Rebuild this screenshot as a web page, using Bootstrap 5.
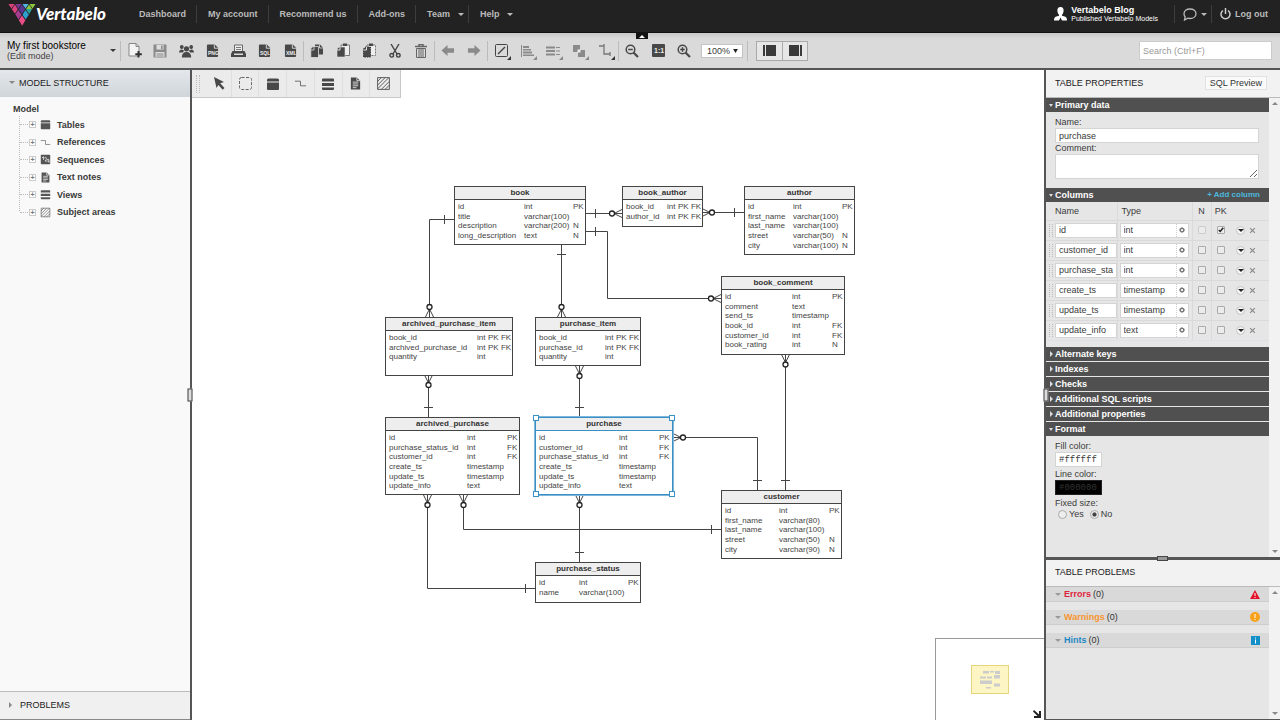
<!DOCTYPE html>
<html lang="en">
<head>
<meta charset="utf-8">
<meta name="viewport" content="width=device-width, initial-scale=1">
<title>Vertabelo - My first bookstore</title>
<link rel="stylesheet" href="https://cdn.jsdelivr.net/npm/bootstrap@5.3.0/dist/css/bootstrap.min.css">
<style>
:root{--ink:#3a3a3a;--line:#555;--panel:#e6e6e6}
body{font-family:"Liberation Sans",Arial,sans-serif;font-size:9px;line-height:12px;color:var(--ink);background:#fff}
button,input,select,textarea{font:inherit;color:inherit;border-radius:0}
button{background:none;border:0;padding:0}
svg{display:block}
svg:not([fill]){fill:currentColor}
a{color:inherit;text-decoration:none}
.caret-s{width:0;height:0;border:3px solid transparent;border-top-color:currentColor;border-bottom:0}
.caret-r{width:3px;height:0;border:3px solid transparent;border-left-color:currentColor;border-right:0}
.caret-u{width:0;height:0;border:3px solid transparent;border-bottom-color:currentColor;border-top:0}

/* top bar */
.topbar{height:33px;background:#222;color:#bbb;font-weight:700;border-bottom:1px solid #111}
.brand-box{width:128px;padding-left:8px}
.brand-name{font:italic 900 17px/20px Lato,sans-serif;color:#fff}
.topnav a{height:18px;padding:0 10px 0 11px;border-right:1px solid #3d3d3d}
.topnav .last-link{border:0}
.who{color:#fff;line-height:9px}
.who small{display:block;font-size:7px;line-height:8px;font-weight:400}
.vsep{width:1px;height:18px;background:#3d3d3d}

/* tool bar */
.toolbar{height:37px;background:linear-gradient(#c8c8c8,#dadada 6px);border-bottom:2px solid var(--line)}
.model-name{width:120px;padding:0 4px 0 7px}
.model-name b{font-size:10px;line-height:11px;font-weight:400;color:#000;display:block}
.model-name span span{line-height:10px;display:block;color:#444}
.tb{width:26px;height:26px;position:relative;color:#484848}
.tb.dim{color:#8a8a8a}
.tsep{width:1px;height:20px;background:#bbb}
.corner::after{content:"";position:absolute;right:3px;bottom:4px;border:2px solid;border-color:transparent #333 #333 transparent}
.corner.dim::after{border-color:transparent #888 #888 transparent}
.zoom-sel{appearance:none;width:42px;height:14px;border:1px solid #c4c4c4;padding:0 0 0 5px;line-height:12px;background:#fff url("data:image/svg+xml,%3Csvg xmlns='http://www.w3.org/2000/svg' viewBox='0 0 6 5'%3E%3Cpath d='M0 0h6L3 5z' fill='%23222'/%3E%3C/svg%3E") right 4px center/5px 4px no-repeat}
.toggle-pair{border:1px solid #aaa;background:#e6e6e6}
.toggle-pair button{width:25px;height:18px}
.toggle-pair button+button{border-left:1px solid #aaa}
.search-in{width:133px;height:19px;border:1px solid #ccc;padding:0 3px;background:#fff}
.search-in::placeholder{color:#999}
.fold-tab{top:33px;left:50%;width:12px;height:6px;margin-left:-4px;background:#111;color:#fff}

/* side panels */
.side-left{width:192px;background:#f9f9f9;border-right:2px solid var(--line);z-index:1}
.side-head{height:27px;padding:0 0 2px 9px;background:linear-gradient(#e4e8ec,#d0d5da);color:#222}
.side-head.foot{height:29px;background:#f0f0f0;border-top:1px solid #bbb;border-bottom:1px solid #888}
.side-head i{color:#888}
.tree-box{padding-top:6px}
.tree-box>div{padding-left:13px}
.tree{height:105px;margin:1px 0 0 19px;border-left:1px dotted #bbb}
.tree li{position:relative}
.tree li::before{content:"";width:8px;border-top:1px dotted #bbb}
.tree li:last-child::after{content:"";position:absolute;left:-1px;top:50%;bottom:0;width:1px;background:#f9f9f9}
.plus{width:7px;height:7px;border:1px solid #ccc;background:#fff;font-size:7px;line-height:5px;color:#777;text-align:center;margin:0 4px 0 1px}
.tree svg{color:#555;margin-right:6px}
.grip{width:5px;height:13px;background:#ddd;border:1px solid #444;z-index:3}

/* canvas */
.canvas{background:#fff;min-width:700px}
.palette{width:209px;height:28px;background:#ebebeb;border:solid #c8c8c8;border-width:0 1px 1px 0;padding:0 2px 0 14px;color:#484848}
.palette::before{content:"";position:absolute;left:4px;top:5px;width:4px;height:18px;border:dotted #bbb;border-width:0 1px}
.palette button{border-right:1px solid #dedede}
.palette button:last-child{border:0}
.links{inset:0;width:100%;height:100%}
.links g{stroke:#444;fill:none}
.entity{position:absolute;border:1px solid #444;background:#fff;font-size:8px;line-height:9px;white-space:nowrap}
.entity table{width:100%;table-layout:fixed}
.entity caption{caption-side:top;height:13px;line-height:12px;padding:0;margin-bottom:1px;background:#eee;border-bottom:1px solid #444;text-align:center;font-weight:700;color:#333}
.entity td{padding:0;color:#444}
.entity tr{height:10px}
.entity tr:nth-child(3n){height:9px}
.entity td:first-child{width:var(--n);padding-left:3px}
.entity td:nth-child(2){width:var(--t)}
#book{left:262px;top:116px;width:132px;height:59px;--n:69px;--t:49px}
#book-author{left:430px;top:116px;width:81px;height:41px;--n:44px;--t:11px}
#author{left:552px;top:116px;width:111px;height:69px;--n:48px;--t:49px}
#book-comment{left:529px;top:206px;width:124px;height:79px;--n:70px;--t:40px}
#archived-purchase-item{left:193px;top:247px;width:128px;height:59px;--n:91px;--t:11px}
#purchase-item{left:343px;top:247px;width:106px;height:49px;--n:69px;--t:11px}
#archived-purchase{left:193px;top:347px;width:135px;height:78px;--n:81px;--t:40px}
#purchase{left:343px;top:347px;width:138px;height:78px;--n:83px;--t:40px}
#customer{left:529px;top:420px;width:121px;height:69px;--n:57px;--t:50px}
#purchase-status{left:343px;top:492px;width:106px;height:41px;--n:43px;--t:49px}
#purchase,#purchase caption{border-color:#3a8fc4}
#purchase{box-shadow:0 0 0 1px #7db7dc}
.knob{position:absolute;width:6px;height:6px;background:#fff;border:1px solid #3a8fc4}
.minimap{right:0;bottom:0;width:109px;height:82px;border:solid #999;border-width:1px 0 0 1px;background:#fff}

/* right panel */
.side-right{width:236px;background:#f2f2f2;border-left:2px solid var(--line);z-index:1}
.props-head{height:28px;padding:0 10px 2px 9px;border-bottom:1px solid #bbb;color:#222}
.sql-btn{background:#fafafa;border:1px solid #e2e2e2;padding:0 4px;height:14px;color:#333;margin-right:3px}
.props{background:var(--panel);min-width:0}
.rail{width:11px;background:#f2f2f2;color:#888;padding:4px 0}
.bar{width:100%;height:14px;background:#505050;color:#fff;font-weight:700;padding:0 9px 0 2px;margin-bottom:1px}
.bar .caret-r{width:3px;margin:0 2px;opacity:.8}
.bar .caret-s{opacity:.8;border-width:3px 2px 0;margin:0 2px 0 1px}
.bars-box{padding-top:6px}
.add-col{color:#4db8dd;font-weight:700;font-size:8px}
.fieldset-box{padding:4px 10px 9px 9px}
.fieldset-box label{display:block;line-height:11px}
.txt{border:1px solid #d4d4d4;background:#fff;padding:0 3px;height:15px;width:100%;display:block}
textarea.txt{height:25px;resize:vertical}
.cols-table{table-layout:fixed;width:100%;color:var(--ink)}
.cols-table th{font-weight:400;height:18px;padding:0}
.cols-table td{height:20px;padding:0;border-top:1px solid #dadada}
.cols-table th+th+th,.cols-table td+td+td{border-left:1px solid #dadada}
.cols-table th+th+th+th+th+th,.cols-table td+td+td+td+td+td{border-left:0}
.handle{width:4px;height:13px;margin-left:3px;border:dotted #bbb;border-width:0 1px}
.type-box{height:15px;margin:0 3px 0 2px;background:#fff;border:1px solid #d4d4d4}
.type-box input{border:0;width:0;min-width:0;padding:0 3px;height:13px;background:none}
.type-box button{width:12px;flex-shrink:0;border-left:1px dotted #ccc;color:#777}
.tick{appearance:none;width:8px;height:8px;border:1px solid #aaa;border-radius:1px;background:#ececec;display:block;margin:0 auto}
.tick:disabled{border-color:#ccc}
.tick:checked{background:#eee url("data:image/svg+xml,%3Csvg xmlns='http://www.w3.org/2000/svg' viewBox='0 0 8 8'%3E%3Cpath d='M1 4l2 2 4-5' fill='none' stroke='%23222' stroke-width='2'/%3E%3C/svg%3E")}
.menu-dot{width:9px;height:9px;border:1px solid #c4c4c4;border-radius:50%;background:#f4f4f4;color:#222}
.menu-dot .caret-s{border-width:3px 3px 0}
.del{color:#888;margin-left:4px;display:block}
.color-in{width:47px;height:15px;border:1px solid #d4d4d4;padding:0 3px;margin-bottom:2px;font-family:"Liberation Mono",monospace;background:#fff;display:block}
.color-in.black{background:#000;color:#333;border-color:#222}
.radio-in{appearance:none;width:9px;height:9px;border:1px solid #aaa;border-radius:50%;background:#eee;margin:0}
.radio-in:checked{background:radial-gradient(circle,#444 35%,#eee 50%)}
.radio-row{gap:2px;padding-left:3px}
.hsplit{height:3px;background:var(--line);position:relative}
.hgrip{left:50%;top:-1px;width:11px;height:5px;margin-left:-6px;background:#999;border:1px solid #444}
.lower{height:160px;border-bottom:1px solid #555}
.lower .props-head{height:27px}
.prob{height:15px;width:100%;background:#d9d9d9;border-bottom:1px solid #cdcdcd;padding:0 9px;color:#333}
.prob .caret-s{color:#999;margin-right:-1px}
.prob b{margin-right:-2px}
.err-tx{color:#e0233c}
.warn-tx{color:#f8952d}
.hint-tx{color:#1e88c4}
</style>
</head>
<body class="vh-100 d-flex flex-column overflow-hidden">

<svg width="0" height="0" class="position-absolute" aria-hidden="true">
  <defs>
    <symbol id="i-table" viewBox="0 0 14 14"><path d="M1 3a1.500 1.500 0 0 1 1.500-1.500h9A1.500 1.500 0 0 1 13 3v1.500H1zM1 5.500h12V12a1 1 0 0 1-1 1H2a1 1 0 0 1-1-1z"/></symbol>
    <symbol id="i-view" viewBox="0 0 14 14"><path d="M1 2.500a1 1 0 0 1 1-1h10a1 1 0 0 1 1 1v2H1zM1 6h12v3H1zM1 10.500h12V12a1 1 0 0 1-1 1H2a1 1 0 0 1-1-1z"/></symbol>
    <symbol id="i-ref" viewBox="0 0 14 14"><path d="M1 4.500h6v5h6" fill="none" stroke="currentColor" stroke-width=".8"/></symbol>
    <symbol id="i-note" viewBox="0 0 14 14"><path d="M2 .500h6.500L12 4v9.500H2z"/><path d="M4 5.500h6M4 7.500h6M4 9.500h6M4 11.500h4M8.500.500v3.500h3.500" stroke="#eee" fill="none" stroke-width=".9"/></symbol>
    <symbol id="i-area" viewBox="0 0 14 14"><path d="M1.500 1.500h11v11h-11zM1.500 5l3.500-3.500M1.500 8.500l7-7M1.500 12l10.500-10.500M5 12.500l7.500-7.500M8.500 12.500l4-4" fill="none" stroke="currentColor" stroke-width=".8"/></symbol>
    <symbol id="i-seq" viewBox="0 0 14 14"><rect x="1" y="1" width="12" height="12" rx="1"/><path d="M2.500 5l2-1.500v4M5.500 5q2-2 2.500 0T6.500 9h3M9 7q3-1 2.500 1t-1.500 1q3 0 1.500 2" fill="none" stroke="#eee"/></symbol>
    <symbol id="i-file" viewBox="0 0 14 14"><path d="M2 0h7.500L13 3.500V12.500a1 1 0 0 1-1 1H2a1 1 0 0 1-1-1V1a1 1 0 0 1 1-1z"/><path d="M9 0v4h4" stroke="#ddd" fill="none"/></symbol>
    <symbol id="i-doc2" viewBox="0 0 14 14"><path d="M5 .500h5l3 3v7H5z"/><path d="M.8 4.500 3 2.500h5.500v11H.8z" stroke="#ddd" stroke-width=".8"/><path d="M4 3v3H1M9.500.500v3.500H13" stroke="#ddd" fill="none" stroke-width=".8"/></symbol>
    <symbol id="i-zoom" viewBox="0 0 14 14"><circle cx="5.500" cy="5.500" r="4.300" fill="none" stroke="currentColor" stroke-width="1.500"/><path d="M8.500 8.500l4.500 4.500" stroke="currentColor" stroke-width="2.200"/><path d="M3.200 5.500h4.600" stroke="currentColor" stroke-width="1.500"/></symbol>
    <symbol id="i-left" viewBox="0 0 14 14"><path d="M0 7l6.500-6v3.500h7v5h-7V13z"/></symbol>
    <symbol id="i-gear" viewBox="0 0 8 8"><path d="M3.300 0h1.400v1.200L6 1.200 7.200 2.400 6.800 3.300H8v1.400H6.800L7 6 5.800 7 4.700 6.800V8H3.300V6.800L2.200 7 1 5.800l.2-1.100H0V3.300h1.200L1 2.200 2.200 1l1.100.2zM4 2.500a1.500 1.500 0 1 0 0 3 1.500 1.500 0 0 0 0-3z" fill-rule="evenodd"/></symbol>
    <symbol id="i-x" viewBox="0 0 6 6"><path d="M1 1l4 4M5 1L1 5" stroke="currentColor"/></symbol>
    <g id="many"><path d="M0-4 8 0 0 4"/><circle cx="10" r="2.500" fill="#fff" stroke="#222" stroke-width="1.300"/></g>
  </defs>
</svg>

<header class="topbar d-flex align-items-center flex-shrink-0 pb-1">
  <a class="brand-box d-flex align-items-center flex-shrink-0" href="#">
    <svg width="28" height="25" viewBox="0 0 28 25" class="flex-shrink-0 mt-1" aria-hidden="true">
      <path d="M0 0h7l3.500 5-3.500 5z" fill="#d8437f"/><path d="M7 0h7l-4 6z" fill="#7b3690"/><path d="M10 5.500l4 5.500-3.500 5L7 10z" fill="#a63c8d"/><path d="M14 0l3.500 5L14 11l-4-5.500z" fill="#5b3690"/><path d="M14 0h7l-3.500 5z" fill="#4fb3e4"/><path d="M17.500 5l3.500 5.500-3.500 5L14 11z" fill="#2f9fd0"/><path d="M21 0h6.500l-3.500 5.500L17.500 5z" fill="#8dc63f"/><path d="M17.500 5h6.500L21 10.500z" fill="#27a39a"/><path d="M14 11l3.500 5.000-3.500 6.000-3.500-6.000z" fill="#ea4c88"/>
      <path d="M3.500 5 7 0M7 10 14 0M10.500 16 21 0M0 0 14 22M7 0 17.500 16M14 0l7 10.500M21 0l3.500 5" stroke="#222" stroke-width=".8"/>
    </svg>
    <span class="brand-name">Vertabelo</span>
  </a>
  <nav class="topnav d-flex align-items-center">
    <a class="d-flex align-items-center" href="#">Dashboard</a>
    <a class="d-flex align-items-center" href="#">My account</a>
    <a class="d-flex align-items-center" href="#">Recommend us</a>
    <a class="d-flex align-items-center" href="#">Add-ons</a>
    <a class="d-flex align-items-center gap-2 pe-1" href="#">Team <i class="caret-s"></i></a>
    <a class="d-flex align-items-center gap-2 last-link" href="#">Help <i class="caret-s"></i></a>
  </nav>
  <div class="ms-auto d-flex align-items-center flex-shrink-0 pe-2 me-1">
    <a class="who d-flex align-items-center gap-1" href="#">
      <svg width="13" height="14" viewBox="0 0 13 14" aria-hidden="true"><path d="M6.500 0C9 0 9.800 1.700 9.600 4c-.2 2-1 3.200-1.600 3.800v1l2.700.8c1.600.5 2.300 1.600 2.300 4H8L6.500 10.500 5 13.600H0c0-2.400.7-3.500 2.300-4L5 8.800v-1C4.400 7.200 3.600 6 3.400 4 3.200 1.700 4 0 6.500 0z"/></svg>
      <span>Vertabelo Blog<small>Published Vertabelo Models</small></span>
    </a>
    <span class="vsep ms-3 me-2"></span>
    <button class="d-flex align-items-center gap-1" aria-label="Chat"><svg width="14" height="13" viewBox="0 0 14 13" aria-hidden="true"><path d="M7 1c3.500 0 6 2 6 4.700S10.500 10.500 7 10.500c-.8 0-1.500 0-2.200-.3L1.500 12l.7-3C1.400 8 1 7 1 5.700 1 3 3.500 1 7 1z" fill="none" stroke="#bbb" stroke-width="1.300"/></svg><i class="caret-s"></i></button>
    <span class="vsep ms-1 me-2"></span>
    <a class="d-flex align-items-center gap-1" href="#"><svg width="11" height="12" viewBox="0 0 11 12" aria-hidden="true"><path d="M3 2.500a4.500 4.500 0 1 0 5 0M5.500 0v6" fill="none" stroke="#ccc" stroke-width="1.500"/></svg>Log out</a>
  </div>
</header>
<button class="fold-tab position-absolute d-flex align-items-center justify-content-center" aria-label="Hide header"><i class="caret-u"></i></button>

<div class="toolbar d-flex align-items-center flex-shrink-0">
  <button class="model-name d-flex align-items-center justify-content-between text-start"><span><b>My first bookstore</b><span>(Edit mode)</span></span><i class="caret-s"></i></button>
  <span class="tsep"></span>
  <button class="tb d-grid" aria-label="New"><svg class="m-auto" width="15" height="15" viewBox="0 0 15 15"><path d="M2 .500h7l3 3v9.500H2z" fill="#f4f4f4" stroke="#888"/><path d="M9 .500v3h3" fill="none" stroke="#888"/><path d="M11.500 8v6.500M8.300 11.300h6.500" stroke="#333" stroke-width="2"/></svg></button>
  <button class="tb dim d-grid" aria-label="Save"><svg class="m-auto" width="14" height="14" viewBox="0 0 14 14"><path d="M.5.500h13v13H.5z"/><path d="M3.500 1h7v4.500h-7zM2.500 8h9v5h-9z" fill="#ddd"/><path d="M8 1.500h1.500V5H8zM3.500 9.500h7v1h-7zM3.500 11.500h7v1h-7z"/></svg></button>
  <button class="tb d-grid" aria-label="Share"><svg class="m-auto" width="15" height="14" viewBox="0 0 15 14"><circle cx="2.800" cy="3" r="1.900"/><circle cx="12.200" cy="3" r="1.900"/><path d="M0 8.500Q.3 5.500 2.800 5.500L5 6.500 4 8.500zM15 8.500q-.3-3-2.800-3L10 6.500l1 2z"/><circle cx="7.500" cy="4.800" r="2.600"/><path d="M2.800 13.500Q3 8 7.500 8t4.700 5.500z"/></svg></button>
  <button class="tb d-grid" aria-label="Export PNG"><svg class="m-auto" width="13" height="14" viewBox="0 0 13 14"><use href="#i-file" width="13" height="14"/><text x="2" y="11" font-size="5" font-weight="700" fill="#eee">PNG</text></svg></button>
  <button class="tb d-grid" aria-label="Print"><svg class="m-auto" width="15" height="14" viewBox="0 0 15 14"><path d="M3.500 7V1h8v6" fill="#eee" stroke="#666"/><path d="M5 3.500h5M5 5.500h5" stroke="#777"/><path d="M1.500 7h12L15 10v3H0v-3z"/><path d="M3 9.500h9v1.500H3z" fill="#ddd"/></svg></button>
  <button class="tb d-grid" aria-label="Export SQL"><svg class="m-auto" width="13" height="14" viewBox="0 0 13 14"><use href="#i-file" width="13" height="14"/><text x="2" y="11" font-size="5" font-weight="700" fill="#eee">SQL</text></svg></button>
  <button class="tb d-grid" aria-label="Export XML"><svg class="m-auto" width="13" height="14" viewBox="0 0 13 14"><use href="#i-file" width="13" height="14"/><text x="2" y="11" font-size="5" font-weight="700" fill="#eee">XML</text></svg></button>
  <span class="tsep"></span>
  <button class="tb d-grid" aria-label="Copy"><svg class="m-auto" width="14" height="14"><use href="#i-doc2"/></svg></button>
  <button class="tb d-grid" aria-label="Paste"><svg class="m-auto" width="15" height="15" viewBox="0 0 15 15"><path d="M5 2h8.500v10.500H5z" fill="#eee" stroke="#777"/><path d="M7 .500h4V3H7z"/><path d="M1 6l2-2h6v10H1z" stroke="#ddd" stroke-width=".6"/><path d="M4 4v3H1" stroke="#ddd" fill="none"/></svg></button>
  <button class="tb d-grid" aria-label="Paste special"><svg class="m-auto" width="15" height="15" viewBox="0 0 15 15"><path d="M5 2h8.500v10.500H5z" fill="#eee" stroke="#777" stroke-dasharray="2 1"/><path d="M7 .500h4V3H7z"/><path d="M1.500 6l2-2h5v10h-7z" stroke="#333" stroke-dasharray="1.500 1"/><path d="M4.500 4v3h-3" stroke="#ddd" fill="none"/></svg></button>
  <button class="tb d-grid" aria-label="Cut"><svg class="m-auto" width="12" height="14" viewBox="0 0 12 14" fill="none" stroke="#444" stroke-width="1.400"><path d="M2 0l6 10M10 0L4 10"/><circle cx="2.700" cy="11.300" r="1.800"/><circle cx="9.300" cy="11.300" r="1.800"/></svg></button>
  <button class="tb d-grid" aria-label="Delete"><svg class="m-auto" width="12" height="14" viewBox="0 0 12 14" fill="none" stroke="#666"><path d="M0 2.500h12M4 2V.500h4V2" stroke-width="1.500"/><path d="M1.500 4.500v9h9v-9zM4 5v8M6 5v8M8 5v8"/></svg></button>
  <span class="tsep"></span>
  <button class="tb dim d-grid" aria-label="Undo"><svg class="m-auto" width="14" height="13"><use href="#i-left"/></svg></button>
  <button class="tb dim d-grid" aria-label="Redo"><svg class="m-auto" width="14" height="13" viewBox="0 0 14 14"><path d="M14 7L7.500 1v3.500h-7v5h7V13z"/></svg></button>
  <span class="tsep"></span>
  <button class="tb corner d-grid" aria-label="Line style"><svg class="m-auto" width="13" height="13" viewBox="0 0 13 13" fill="none" stroke="#444"><rect x=".5" y=".5" width="12" height="12" rx="1"/><path d="M3 10l7-7" stroke-width="1.500"/></svg></button>
  <button class="tb dim corner d-grid" aria-label="Align"><svg class="m-auto" width="13" height="12" viewBox="0 0 13 12"><path d="M0 0h1v12H0zM2 1h6v2H2zM2 4h8v1.500H2zM2 6.500h9v2H2zM2 9.500h11v1.500H2z"/></svg></button>
  <button class="tb dim corner d-grid" aria-label="Distribute"><svg class="m-auto" width="14" height="10" viewBox="0 0 14 10"><path d="M0 .500h9v2H0zM0 4h9v2H0zM0 7.500h9v2H0zM10 1h4v1h-4zM10 4.500h4v1h-4zM10 8h4v1h-4z"/></svg></button>
  <button class="tb dim corner d-grid" aria-label="Arrange"><svg class="m-auto" width="12" height="12" viewBox="0 0 12 12"><path d="M0 0h7v7H0zM5 5h7v7H5z"/><path d="M4.500 4.500h3v3h-3z" fill="#eee"/></svg></button>
  <button class="tb corner d-grid" aria-label="Routing"><svg class="m-auto" width="13" height="13" viewBox="0 0 13 13" fill="none" stroke="#777"><path d="M0 2h5v8h6M5 0v2M11 8v4" stroke-width="1.300"/></svg></button>
  <span class="tsep"></span>
  <button class="tb d-grid" aria-label="Zoom out"><svg class="m-auto" width="14" height="14"><use href="#i-zoom"/></svg></button>
  <button class="tb d-grid" aria-label="Actual size"><svg class="m-auto" width="13" height="13" viewBox="0 0 13 13"><rect width="13" height="13" rx="1"/><text x="2" y="9" font-size="7" font-weight="700" fill="#eee">1:1</text></svg></button>
  <button class="tb d-grid" aria-label="Zoom in"><svg class="m-auto" width="14" height="14" viewBox="0 0 14 14"><use href="#i-zoom"/><path d="M5.500 3.200v4.600" stroke="#444" stroke-width="1.500"/></svg></button>
  <select class="zoom-sel ms-1" aria-label="Zoom level"><option>100%</option></select>
  <span class="tsep ms-1 me-2"></span>
  <div class="toggle-pair d-flex">
    <button class="d-grid" aria-label="Left panel"><svg class="m-auto" width="13" height="11"><path d="M0 0h2v11H0zM3 0h10v11H3z"/></svg></button>
    <button class="d-grid" aria-label="Right panel"><svg class="m-auto" width="13" height="11"><path d="M0 0h10v11H0zM11 0h2v11h-2z"/></svg></button>
  </div>
  <input class="search-in ms-auto me-2" type="search" placeholder="Search (Ctrl+F)" aria-label="Search">
</div>

<div class="d-flex flex-grow-1 overflow-hidden">
  <aside class="side-left d-flex flex-column flex-shrink-0 position-relative">
    <button class="side-head d-flex align-items-center gap-1"><i class="caret-s"></i>MODEL STRUCTURE</button>
    <div class="tree-box fw-bold">
      <div>Model</div>
      <ul class="tree list-unstyled d-flex flex-column">
        <li class="d-flex align-items-center flex-fill"><span class="plus">+</span><svg width="11" height="11"><use href="#i-table"/></svg>Tables</li>
        <li class="d-flex align-items-center flex-fill"><span class="plus">+</span><svg width="11" height="11"><use href="#i-ref"/></svg>References</li>
        <li class="d-flex align-items-center flex-fill"><span class="plus">+</span><svg width="11" height="11"><use href="#i-seq"/></svg>Sequences</li>
        <li class="d-flex align-items-center flex-fill"><span class="plus">+</span><svg width="11" height="11"><use href="#i-note"/></svg>Text notes</li>
        <li class="d-flex align-items-center flex-fill"><span class="plus">+</span><svg width="11" height="11"><use href="#i-view"/></svg>Views</li>
        <li class="d-flex align-items-center flex-fill"><span class="plus">+</span><svg width="11" height="11"><use href="#i-area"/></svg>Subject areas</li>
      </ul>
    </div>
    <button class="side-head foot d-flex align-items-center gap-2 mt-auto"><i class="caret-r"></i>PROBLEMS</button>
    <span class="grip position-absolute top-50 start-100 translate-middle"></span>
  </aside>

  <main class="canvas position-relative flex-grow-1 overflow-hidden">
    <svg class="links position-absolute" aria-hidden="true">
      <g transform="translate(-192 -70)">
        <path d="M454 219.500H429.500V317M444.500 215v9M586 213.500h36M595.500 209v9M586 231.500h21.500V298.500H721M595.500 227v9M561.500 244v73M557 254.500h9M702 212.500h42M734.500 208v9M785.500 354V490M781 480.500h9M428.500 375v42M424 407.500h9M579.500 365v52M575 407.500h9M673 437.500h84.500V490M753 480.500h9M427.500 495v93.500H535M525.500 584v9M463.500 495v34.500H721M711.500 525v9M579.500 495v67M575 552.500h9"/>
        <use href="#many" transform="translate(429.500 317) rotate(-90)"/>
        <use href="#many" transform="translate(561.500 317) rotate(-90)"/>
        <use href="#many" transform="translate(622 213.500) rotate(180)"/>
        <use href="#many" transform="translate(721 298.500) rotate(180)"/>
        <use href="#many" transform="translate(702 212.500)"/>
        <use href="#many" transform="translate(673 437.500)"/>
        <use href="#many" transform="translate(785.500 354.500) rotate(90)"/>
        <use href="#many" transform="translate(428.500 375) rotate(90)"/>
        <use href="#many" transform="translate(579.500 366) rotate(90)"/>
        <use href="#many" transform="translate(427.500 495) rotate(90)"/>
        <use href="#many" transform="translate(463.500 495) rotate(90)"/>
        <use href="#many" transform="translate(579.500 495) rotate(90)"/>
      </g>
    </svg>

    <div class="entity" id="book"><table><caption>book</caption><tbody>
      <tr><td>id</td><td>int</td><td>PK</td></tr><tr><td>title</td><td>varchar(100)</td><td></td></tr><tr><td>description</td><td>varchar(200)</td><td>N</td></tr><tr><td>long_description</td><td>text</td><td>N</td></tr></tbody></table></div>
    <div class="entity" id="book-author"><table><caption>book_author</caption><tbody>
      <tr><td>book_id</td><td>int</td><td>PK FK</td></tr><tr><td>author_id</td><td>int</td><td>PK FK</td></tr></tbody></table></div>
    <div class="entity" id="author"><table><caption>author</caption><tbody>
      <tr><td>id</td><td>int</td><td>PK</td></tr><tr><td>first_name</td><td>varchar(100)</td><td></td></tr><tr><td>last_name</td><td>varchar(100)</td><td></td></tr><tr><td>street</td><td>varchar(50)</td><td>N</td></tr><tr><td>city</td><td>varchar(100)</td><td>N</td></tr></tbody></table></div>
    <div class="entity" id="book-comment"><table><caption>book_comment</caption><tbody>
      <tr><td>id</td><td>int</td><td>PK</td></tr><tr><td>comment</td><td>text</td><td></td></tr><tr><td>send_ts</td><td>timestamp</td><td></td></tr><tr><td>book_id</td><td>int</td><td>FK</td></tr><tr><td>customer_id</td><td>int</td><td>FK</td></tr><tr><td>book_rating</td><td>int</td><td>N</td></tr></tbody></table></div>
    <div class="entity" id="archived-purchase-item"><table><caption>archived_purchase_item</caption><tbody>
      <tr><td>book_id</td><td>int</td><td>PK FK</td></tr><tr><td>archived_purchase_id</td><td>int</td><td>PK FK</td></tr><tr><td>quantity</td><td>int</td><td></td></tr></tbody></table></div>
    <div class="entity" id="purchase-item"><table><caption>purchase_item</caption><tbody>
      <tr><td>book_id</td><td>int</td><td>PK FK</td></tr><tr><td>purchase_id</td><td>int</td><td>PK FK</td></tr><tr><td>quantity</td><td>int</td><td></td></tr></tbody></table></div>
    <div class="entity" id="archived-purchase"><table><caption>archived_purchase</caption><tbody>
      <tr><td>id</td><td>int</td><td>PK</td></tr><tr><td>purchase_status_id</td><td>int</td><td>FK</td></tr><tr><td>customer_id</td><td>int</td><td>FK</td></tr><tr><td>create_ts</td><td>timestamp</td><td></td></tr><tr><td>update_ts</td><td>timestamp</td><td></td></tr><tr><td>update_info</td><td>text</td><td></td></tr></tbody></table></div>
    <div class="entity" id="purchase"><table><caption>purchase</caption><tbody>
      <tr><td>id</td><td>int</td><td>PK</td></tr><tr><td>customer_id</td><td>int</td><td>FK</td></tr><tr><td>purchase_status_id</td><td>int</td><td>FK</td></tr><tr><td>create_ts</td><td>timestamp</td><td></td></tr><tr><td>update_ts</td><td>timestamp</td><td></td></tr><tr><td>update_info</td><td>text</td><td></td></tr></tbody></table>
      <span class="knob top-0 start-0 translate-middle"></span><span class="knob top-0 start-100 translate-middle"></span><span class="knob top-100 start-0 translate-middle"></span><span class="knob top-100 start-100 translate-middle"></span></div>
    <div class="entity" id="customer"><table><caption>customer</caption><tbody>
      <tr><td>id</td><td>int</td><td>PK</td></tr><tr><td>first_name</td><td>varchar(80)</td><td></td></tr><tr><td>last_name</td><td>varchar(100)</td><td></td></tr><tr><td>street</td><td>varchar(50)</td><td>N</td></tr><tr><td>city</td><td>varchar(90)</td><td>N</td></tr></tbody></table></div>
    <div class="entity" id="purchase-status"><table><caption>purchase_status</caption><tbody>
      <tr><td>id</td><td>int</td><td>PK</td></tr><tr><td>name</td><td>varchar(100)</td><td></td></tr></tbody></table></div>

    <div class="palette position-relative d-flex">
      <button class="d-grid flex-fill" aria-label="Select"><svg class="m-auto" width="12" height="13" viewBox="0 0 12 13"><path d="M1 0l10 5-3.800 1.300 4.300 4.700-1.800 1.800-4.300-4.700L3.500 11z"/></svg></button>
      <button class="d-grid flex-fill" aria-label="Select area"><svg class="m-auto" width="13" height="13" viewBox="0 0 13 13"><rect x=".5" y=".5" width="12" height="12" rx="2" fill="none" stroke="#666" stroke-dasharray="3 1.500"/></svg></button>
      <button class="d-grid flex-fill" aria-label="Add table"><svg class="m-auto" width="14" height="14"><use href="#i-table"/></svg></button>
      <button class="d-grid flex-fill" aria-label="Add reference"><svg class="m-auto" width="13" height="13"><use href="#i-ref"/></svg></button>
      <button class="d-grid flex-fill" aria-label="Add view"><svg class="m-auto" width="14" height="14"><use href="#i-view"/></svg></button>
      <button class="d-grid flex-fill" aria-label="Add note"><svg class="m-auto" width="13" height="13"><use href="#i-note"/></svg></button>
      <button class="d-grid flex-fill" aria-label="Add area"><svg class="m-auto" width="15" height="15"><use href="#i-area"/></svg></button>
    </div>

    <div class="minimap position-absolute">
      <svg width="108" height="81" viewBox="0 0 108 81" aria-hidden="true">
        <rect x="35.500" y="26.500" width="37" height="28" fill="#fdf5c4" stroke="#e6d57a"/>
        <path d="M47 32h6v2.500h-6zM54 32h4v1.500h-4zM59 32h5v3h-5zM58 36h6v3.500h-6zM44 37.500h6v2h-6zM51 37.500h5v2h-5zM44 41.500h12v3.500H44zM58 44.500h6v3h-6zM50 48h5v1.500h-5z" fill="#ccc"/>
        <path d="M98 71l5 4.500V72h2v7h-7v-2h3.500L97 72.500z" fill="#222"/>
      </svg>
    </div>
  </main>

  <aside class="side-right d-flex flex-column flex-shrink-0 position-relative">
    <span class="grip position-absolute top-50 start-0 translate-middle"></span>
    <div class="props-head d-flex align-items-center justify-content-between">TABLE PROPERTIES<button class="sql-btn">SQL Preview</button></div>
    <div class="d-flex flex-grow-1 overflow-hidden">
      <div class="props flex-grow-1">
        <button class="bar d-flex align-items-center"><i class="caret-s"></i>Primary data</button>
        <div class="fieldset-box">
          <label for="t-name">Name:</label><input class="txt" id="t-name" value="purchase">
          <label for="t-comment">Comment:</label><textarea class="txt" id="t-comment"></textarea>
        </div>
        <div class="bar d-flex align-items-center mb-0"><i class="caret-s"></i>Columns<button class="add-col ms-auto">+ Add column</button></div>
        <table class="cols-table">
          <colgroup><col width="9"><col width="62"><col width="75"><col width="19"><col width="19"><col width="15"><col></colgroup>
          <thead><tr><th></th><th>Name</th><th class="ps-1">Type</th><th class="text-center">N</th><th class="text-center">PK</th><th></th><th></th></tr></thead>
          <tbody>
            <tr><td><div class="handle"></div></td><td><input class="txt" aria-label="Name" value="id"></td><td><div class="type-box d-flex"><input class="flex-fill" aria-label="Type" value="int"><button class="d-grid" aria-label="Choose type"><svg class="m-auto" width="6" height="6"><use href="#i-gear"/></svg></button></div></td><td><input class="tick" type="checkbox" aria-label="N" disabled></td><td><input class="tick" type="checkbox" aria-label="PK" checked></td><td><button class="menu-dot d-grid ms-auto" aria-label="More"><i class="caret-s m-auto"></i></button></td><td><button class="del" aria-label="Remove"><svg width="7" height="7"><use href="#i-x"/></svg></button></td></tr>
            <tr><td><div class="handle"></div></td><td><input class="txt" aria-label="Name" value="customer_id"></td><td><div class="type-box d-flex"><input class="flex-fill" aria-label="Type" value="int"><button class="d-grid" aria-label="Choose type"><svg class="m-auto" width="6" height="6"><use href="#i-gear"/></svg></button></div></td><td><input class="tick" type="checkbox" aria-label="N"></td><td><input class="tick" type="checkbox" aria-label="PK"></td><td><button class="menu-dot d-grid ms-auto" aria-label="More"><i class="caret-s m-auto"></i></button></td><td><button class="del" aria-label="Remove"><svg width="7" height="7"><use href="#i-x"/></svg></button></td></tr>
            <tr><td><div class="handle"></div></td><td><input class="txt" aria-label="Name" value="purchase_sta"></td><td><div class="type-box d-flex"><input class="flex-fill" aria-label="Type" value="int"><button class="d-grid" aria-label="Choose type"><svg class="m-auto" width="6" height="6"><use href="#i-gear"/></svg></button></div></td><td><input class="tick" type="checkbox" aria-label="N"></td><td><input class="tick" type="checkbox" aria-label="PK"></td><td><button class="menu-dot d-grid ms-auto" aria-label="More"><i class="caret-s m-auto"></i></button></td><td><button class="del" aria-label="Remove"><svg width="7" height="7"><use href="#i-x"/></svg></button></td></tr>
            <tr><td><div class="handle"></div></td><td><input class="txt" aria-label="Name" value="create_ts"></td><td><div class="type-box d-flex"><input class="flex-fill" aria-label="Type" value="timestamp"><button class="d-grid" aria-label="Choose type"><svg class="m-auto" width="6" height="6"><use href="#i-gear"/></svg></button></div></td><td><input class="tick" type="checkbox" aria-label="N"></td><td><input class="tick" type="checkbox" aria-label="PK"></td><td><button class="menu-dot d-grid ms-auto" aria-label="More"><i class="caret-s m-auto"></i></button></td><td><button class="del" aria-label="Remove"><svg width="7" height="7"><use href="#i-x"/></svg></button></td></tr>
            <tr><td><div class="handle"></div></td><td><input class="txt" aria-label="Name" value="update_ts"></td><td><div class="type-box d-flex"><input class="flex-fill" aria-label="Type" value="timestamp"><button class="d-grid" aria-label="Choose type"><svg class="m-auto" width="6" height="6"><use href="#i-gear"/></svg></button></div></td><td><input class="tick" type="checkbox" aria-label="N"></td><td><input class="tick" type="checkbox" aria-label="PK"></td><td><button class="menu-dot d-grid ms-auto" aria-label="More"><i class="caret-s m-auto"></i></button></td><td><button class="del" aria-label="Remove"><svg width="7" height="7"><use href="#i-x"/></svg></button></td></tr>
            <tr><td><div class="handle"></div></td><td><input class="txt" aria-label="Name" value="update_info"></td><td><div class="type-box d-flex"><input class="flex-fill" aria-label="Type" value="text"><button class="d-grid" aria-label="Choose type"><svg class="m-auto" width="6" height="6"><use href="#i-gear"/></svg></button></div></td><td><input class="tick" type="checkbox" aria-label="N"></td><td><input class="tick" type="checkbox" aria-label="PK"></td><td><button class="menu-dot d-grid ms-auto" aria-label="More"><i class="caret-s m-auto"></i></button></td><td><button class="del" aria-label="Remove"><svg width="7" height="7"><use href="#i-x"/></svg></button></td></tr>
          </tbody>
        </table>
        <div class="bars-box border-top">
          <button class="bar d-flex align-items-center"><i class="caret-r"></i>Alternate keys</button>
          <button class="bar d-flex align-items-center"><i class="caret-r"></i>Indexes</button>
          <button class="bar d-flex align-items-center"><i class="caret-r"></i>Checks</button>
          <button class="bar d-flex align-items-center"><i class="caret-r"></i>Additional SQL scripts</button>
          <button class="bar d-flex align-items-center"><i class="caret-r"></i>Additional properties</button>
          <button class="bar d-flex align-items-center"><i class="caret-s"></i>Format</button>
        </div>
        <div class="fieldset-box">
          <label for="f-fill">Fill color:</label><input class="color-in" id="f-fill" value="#ffffff">
          <label for="f-line">Line color:</label><input class="color-in black" id="f-line" value="#000000">
          <div>Fixed size:</div>
          <div class="radio-row d-flex align-items-center"><input class="radio-in" type="radio" name="fixed" id="fx-y"><label for="fx-y" class="me-1">Yes</label><input class="radio-in" type="radio" name="fixed" id="fx-n" checked><label for="fx-n">No</label></div>
        </div>
      </div>
      <div class="rail d-flex flex-column flex-shrink-0 justify-content-between align-items-center"><i class="caret-u"></i><i class="caret-s"></i></div>
    </div>
    <div class="hsplit flex-shrink-0"><span class="hgrip position-absolute"></span></div>
    <section class="lower d-flex flex-column flex-shrink-0">
      <div class="props-head d-flex align-items-center flex-shrink-0">TABLE PROBLEMS</div>
      <div class="d-flex flex-grow-1">
        <div class="props flex-grow-1 d-flex flex-column gap-2">
          <button class="prob d-flex align-items-center gap-1"><i class="caret-s"></i><b class="err-tx">Errors</b>(0)<svg class="ms-auto" width="10" height="9" viewBox="0 0 10 9"><path d="M5 0l5 9H0z" fill="#e3122a"/><path d="M5 3v3M5 7v1" stroke="#fff"/></svg></button>
          <button class="prob d-flex align-items-center gap-1"><i class="caret-s"></i><b class="warn-tx">Warnings</b>(0)<svg class="ms-auto" width="10" height="10" viewBox="0 0 10 10"><circle cx="5" cy="5" r="5" fill="#f8a11b"/><path d="M5 2v4M5 7v1" stroke="#fff"/></svg></button>
          <button class="prob d-flex align-items-center gap-1"><i class="caret-s"></i><b class="hint-tx">Hints</b>(0)<svg class="ms-auto" width="9" height="9" viewBox="0 0 9 9"><path d="M0 0h9v9H0z" fill="#148fc8"/><path d="M4.500 1.500v1M4.500 3.500v4" stroke="#fff"/></svg></button>
        </div>
        <div class="rail d-flex flex-column flex-shrink-0 justify-content-between align-items-center"><i class="caret-u"></i><i class="caret-s"></i></div>
      </div>
    </section>
  </aside>
</div>
<script src="https://cdn.jsdelivr.net/npm/bootstrap@5.3.0/dist/js/bootstrap.bundle.min.js"></script>
</body>
</html>
